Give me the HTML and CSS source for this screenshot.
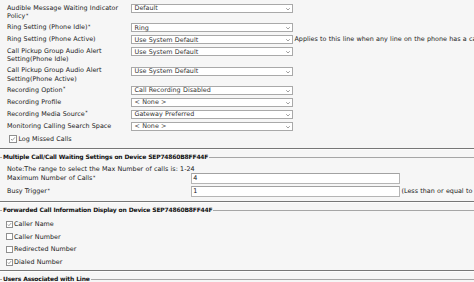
FILE: index.html
```html
<!DOCTYPE html>
<html lang="en">
<head>
<meta charset="utf-8">
<title>Line Settings</title>
<link rel="stylesheet" href="styles.css">
</head>
<body>
<fieldset class="fs fs-top">
  <div class="form-grid">
    <div class="lbl">Audible Message Waiting Indicator Policy<sup class="req">*</sup></div>
    <div class="sel"><span>Default</span><svg class="chev" viewBox="0 0 6 6"><polyline points="1.2,2.2 3,4 4.8,2.2"/></svg></div>
    <div class="hint"></div>

    <div class="lbl">Ring Setting (Phone Idle)<sup class="req">*</sup></div>
    <div class="sel"><span>Ring</span><svg class="chev" viewBox="0 0 6 6"><polyline points="1.2,2.2 3,4 4.8,2.2"/></svg></div>
    <div class="hint"></div>

    <div class="lbl">Ring Setting (Phone Active)</div>
    <div class="sel"><span>Use System Default</span><svg class="chev" viewBox="0 0 6 6"><polyline points="1.2,2.2 3,4 4.8,2.2"/></svg></div>
    <div class="hint">Applies to this line when any line on the phone has a call in progress.</div>

    <div class="lbl">Call Pickup Group Audio Alert Setting(Phone Idle)</div>
    <div class="sel"><span>Use System Default</span><svg class="chev" viewBox="0 0 6 6"><polyline points="1.2,2.2 3,4 4.8,2.2"/></svg></div>
    <div class="hint"></div>

    <div class="lbl">Call Pickup Group Audio Alert Setting(Phone Active)</div>
    <div class="sel"><span>Use System Default</span><svg class="chev" viewBox="0 0 6 6"><polyline points="1.2,2.2 3,4 4.8,2.2"/></svg></div>
    <div class="hint"></div>

    <div class="lbl">Recording Option<sup class="req">*</sup></div>
    <div class="sel"><span>Call Recording Disabled</span><svg class="chev" viewBox="0 0 6 6"><polyline points="1.2,2.2 3,4 4.8,2.2"/></svg></div>
    <div class="hint"></div>

    <div class="lbl">Recording Profile</div>
    <div class="sel"><span>&lt; None &gt;</span><svg class="chev" viewBox="0 0 6 6"><polyline points="1.2,2.2 3,4 4.8,2.2"/></svg></div>
    <div class="hint"></div>

    <div class="lbl">Recording Media Source<sup class="req">*</sup></div>
    <div class="sel"><span>Gateway Preferred</span><svg class="chev" viewBox="0 0 6 6"><polyline points="1.2,2.2 3,4 4.8,2.2"/></svg></div>
    <div class="hint"></div>

    <div class="lbl">Monitoring Calling Search Space</div>
    <div class="sel"><span>&lt; None &gt;</span><svg class="chev" viewBox="0 0 6 6"><polyline points="1.2,2.2 3,4 4.8,2.2"/></svg></div>
    <div class="hint"></div>
  </div>
  <div class="cb-row cb-log"><span class="cb cb-big"><svg viewBox="0 0 8 8"><polyline points="1.4,4 3,5.8 6.6,1.8"/></svg></span>Log Missed Calls</div>
</fieldset>

<fieldset class="fs fs-calls">
  <legend>Multiple Call/Call Waiting Settings on Device SEP74860B8FF44F</legend>
  <div class="note">Note:The range to select the Max Number of calls is: 1-24</div>
  <div class="input-grid">
    <div class="lbl">Maximum Number of Calls<sup class="req">*</sup></div>
    <div class="inp">4</div>
    <div class="hint"></div>
    <div class="lbl">Busy Trigger<sup class="req">*</sup></div>
    <div class="inp">1</div>
    <div class="hint">(Less than or equal to Max. Calls)</div>
  </div>
</fieldset>

<fieldset class="fs fs-fwd">
  <legend>Forwarded Call Information Display on Device SEP74860B8FF44F</legend>
  <div class="cb-row"><span class="cb"><svg viewBox="0 0 7 7"><polyline points="1.2,3.5 2.7,5.1 5.8,1.5"/></svg></span>Caller Name</div>
  <div class="cb-row"><span class="cb"></span>Caller Number</div>
  <div class="cb-row"><span class="cb"></span>Redirected Number</div>
  <div class="cb-row"><span class="cb"><svg viewBox="0 0 7 7"><polyline points="1.2,3.5 2.7,5.1 5.8,1.5"/></svg></span>Dialed Number</div>
</fieldset>

<fieldset class="fs fs-users">
  <legend>Users Associated with Line</legend>
  <div class="spacer"></div>
</fieldset>
</body>
</html>
```

FILE: styles.css
```css
html, body {
  margin: 0;
  padding: 0;
  overflow: hidden;
}

body {
  width: 474px;
  height: 282px;
  background: #f6f6f6;
  color: #222;
  font-family: "DejaVu Sans", Verdana, sans-serif;
  font-size: 6.4px;
  word-spacing: 0.25px;
  line-height: 8.3px;
}

.fs {
  margin: 0 -20px 4px -4px;
  padding: 0 0 0 11px;
  border: 0;
  border-top: 1px solid #a6a6a6;
  border-bottom: 1px solid #777;
  box-shadow: 0 1px 0 #fdfdfd;
  min-width: 0;
}

.fs legend {
  margin-left: -5px;
  padding: 0 1px;
  font-weight: bold;
  font-size: 6px;
  letter-spacing: -0.2px;
  line-height: 8.5px;
  color: #111;
}

.fs-top {
  border-top: 0;
  padding-top: 4px;
  padding-bottom: 3.5px;
}

.form-grid {
  display: grid;
  grid-template-columns: 124px 162px auto;
  row-gap: 3px;
  align-items: start;
}

.lbl {
  padding-right: 4px;
  line-height: 8.3px;
  margin-top: -0.3px;
}

.req {
  font-size: 4.8px;
  line-height: 0;
  vertical-align: 1.4px;
  margin-left: 0.5px;
}

.sel {
  height: 9px;
  box-sizing: border-box;
  border: 1px solid #a9a9a9;
  background: #fff;
  display: flex;
  align-items: center;
  justify-content: space-between;
  padding: 0 1px 0 2.5px;
  color: #333;
  white-space: nowrap;
}

.chev {
  width: 6px;
  height: 6px;
  margin-top: 1px;
}

.chev polyline {
  fill: none;
  stroke: #777;
  stroke-width: 0.7;
}

.hint {
  white-space: nowrap;
  padding-left: 1.5px;
  line-height: 9px;
}

.cb-row {
  display: flex;
  align-items: center;
  white-space: nowrap;
}

.cb-log {
  height: 11px;
  margin-top: 3px;
  margin-left: 2px;
}

.cb {
  width: 7px;
  height: 7px;
  box-sizing: border-box;
  border: 1px solid #8f8f8f;
  background: #fff;
  margin-right: 1.4px;
  display: flex;
}

.cb svg {
  width: 100%;
  height: 100%;
}

.cb polyline {
  fill: none;
  stroke: #555;
  stroke-width: 0.8;
}

.cb-big {
  width: 8px;
  height: 8px;
}

.fs-calls {
  padding-top: 4.4px;
  padding-bottom: 4px;
}

.note {
  line-height: 7px;
}

.input-grid {
  display: grid;
  grid-template-columns: 183.7px 209.3px auto;
  row-gap: 1.5px;
  align-items: center;
}

.inp {
  height: 11px;
  box-sizing: border-box;
  border: 1px solid #b5b5b5;
  border-top-color: #a2a2a2;
  background: #fff;
  padding-left: 1.5px;
  line-height: 9px;
  color: #222;
}

.fs-fwd {
  padding-top: 3.6px;
  padding-bottom: 1.5px;
}

.fs-fwd .cb-row {
  height: 12.7px;
  margin-left: -1.3px;
}

.spacer {
  height: 20px;
}
```
